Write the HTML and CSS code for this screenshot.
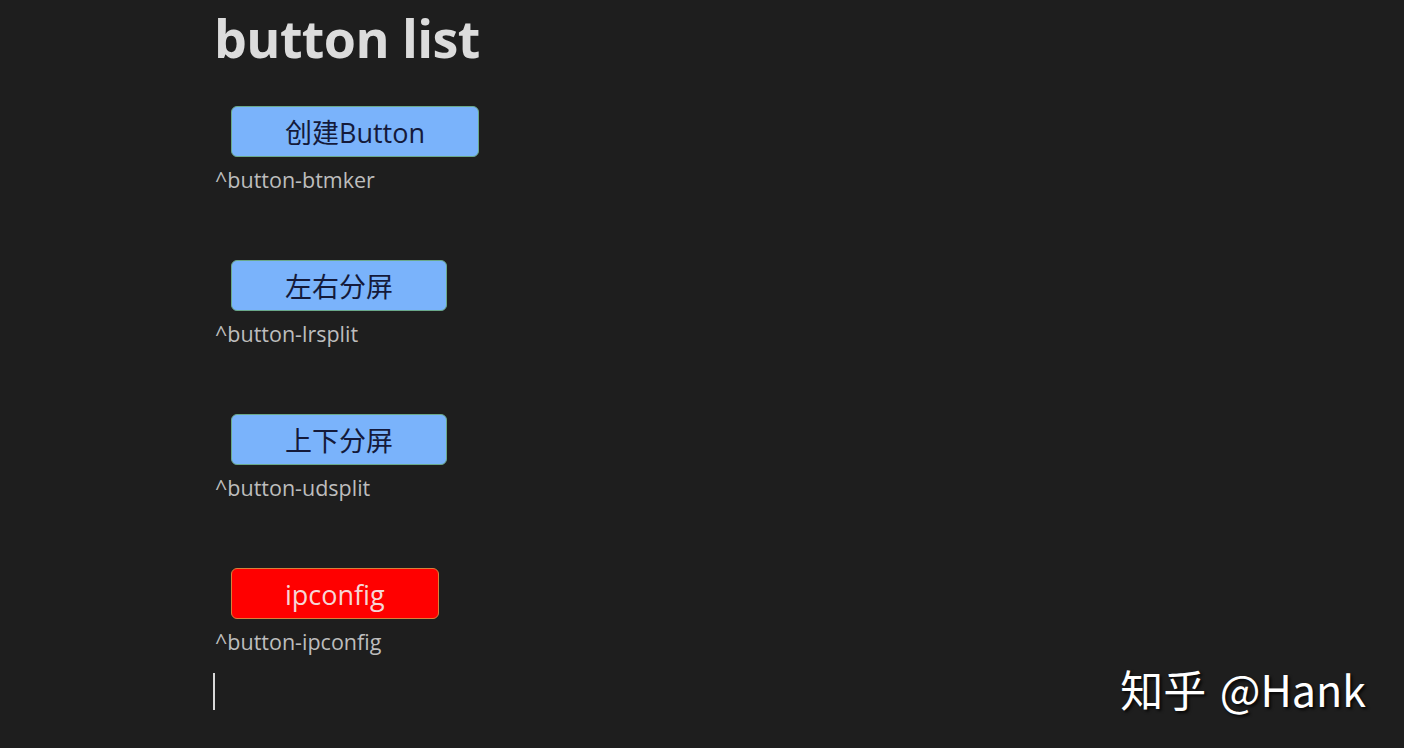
FILE: index.html
```html
<!DOCTYPE html>
<html>
<head>
<meta charset="utf-8">
<link rel="stylesheet" href="styles.css">
</head>
<body>
<main class="page">
  <h1 class="title">button list</h1>
  <section class="item">
    <button class="btn btn-blue">创建Button</button>
    <p class="caption">^button-btmker</p>
  </section>
  <section class="item">
    <button class="btn btn-blue">左右分屏</button>
    <p class="caption">^button-lrsplit</p>
  </section>
  <section class="item">
    <button class="btn btn-blue">上下分屏</button>
    <p class="caption">^button-udsplit</p>
  </section>
  <section class="item">
    <button class="btn btn-red">ipconfig</button>
    <p class="caption">^button-ipconfig</p>
  </section>
  <div class="cursor"></div>
</main>
<div class="watermark">知乎 @Hank</div>
</body>
</html>
```
FILE: styles.css
```css
html, body {
  margin: 0;
  padding: 0;
  background: #1e1e1e;
  height: 100%;
  overflow: hidden;
}
body {
  font-family: "Open Sans", "Noto Sans CJK SC", sans-serif;
  color: #cccccc;
}
.page {
  padding-left: 215px;
  display: flex;
  flex-direction: column;
}
.title {
  margin: 0 0 0 -1px;
  font-family: "Open Sans", sans-serif;
  font-weight: 700;
  font-size: 52px;
  line-height: 76px;
  color: #dcdcdc;
  letter-spacing: -0.6px;
}
.item {
  display: flex;
  flex-direction: column;
  align-items: flex-start;
  height: 154px;
}
.item:first-of-type {
  margin-top: 30px;
}
.btn {
  margin-left: 16px;
  height: 51px;
  padding: 0 53px;
  border-radius: 6px;
  font-family: "Open Sans", "Noto Sans CJK SC", sans-serif;
  font-size: 27px;
  line-height: 51px;
  cursor: pointer;
}
.btn-blue {
  background: #7ab3fb;
  border: 1px solid #6aa88a;
  color: #141a3a;
}
.btn-red {
  background: #ff0000;
  border: 1px solid #d8803a;
  color: #f6d6d6;
}
.caption {
  margin: 8px 0 0 0;
  font-size: 21.5px;
  line-height: 30px;
  color: #bdbdbd;
}
.cursor {
  margin-top: -49px;
  width: 2px;
  height: 37px;
  margin-left: -2px;
  background: #d8d8d8;
}
.watermark {
  position: absolute;
  right: 38px;
  bottom: 35px;
  font-family: "Noto Sans CJK SC", "Open Sans", sans-serif;
  font-weight: 400;
  font-size: 43px;
  line-height: 50px;
  word-spacing: 4px;
  color: #ffffff;
  text-shadow: 2px 2px 3px rgba(0,0,0,0.8);
}
```
